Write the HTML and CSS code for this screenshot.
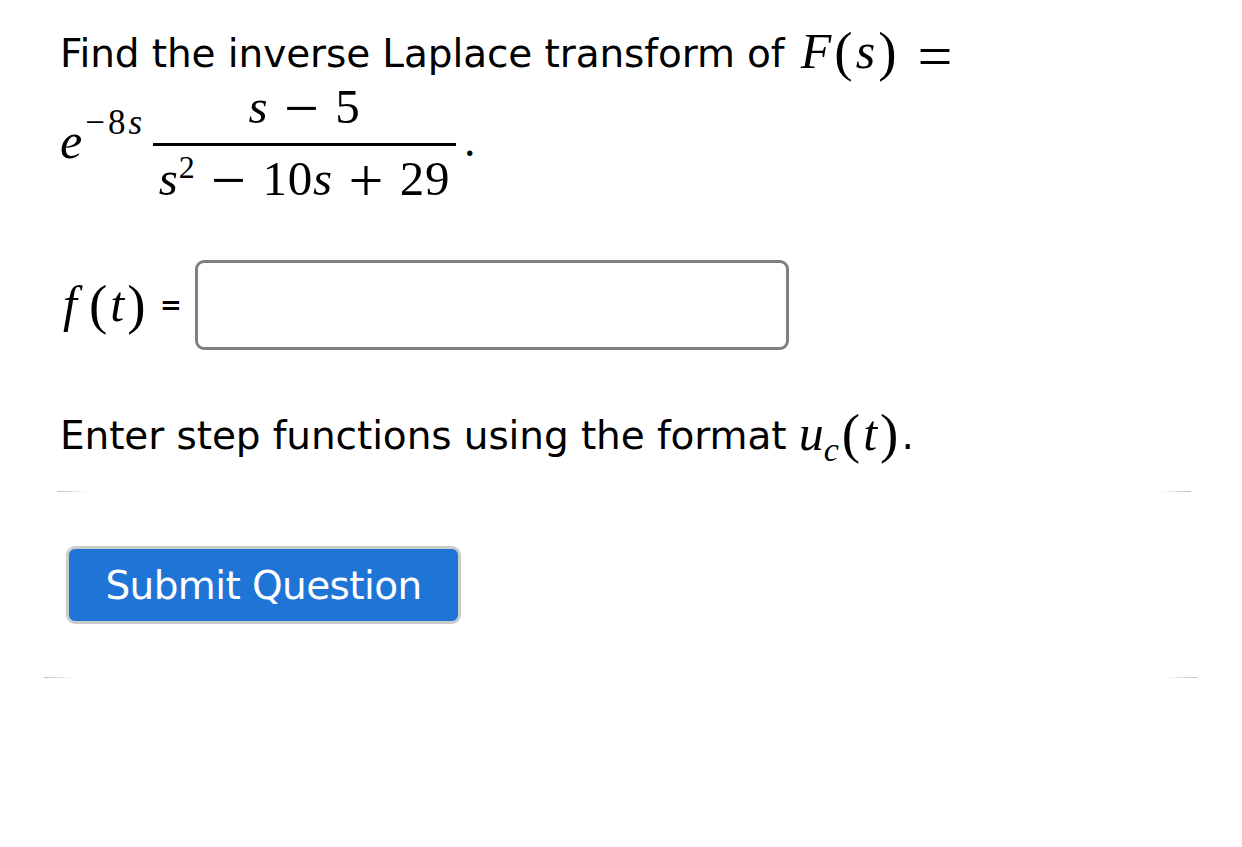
FILE: index.html
```html
<!DOCTYPE html>
<html lang="en">
<head>
    <meta charset="UTF-8">
    <title>Question</title>
    <link rel="stylesheet" href="styles.css">
</head>
<body>
    <div class="question">
        <p class="line first-line">Find the inverse Laplace transform of <span class="math big-f">F</span><span class="math-paren">(</span><span class="math">s</span><span class="math-paren">)</span><span class="math-eq">=</span></p>
        <div class="formula">
            <span class="math base">e</span><span class="exponent">−8<i>s</i></span>
            <span class="fraction">
                <span class="numerator"><i>s</i> <span class="op">−</span> 5</span>
                <span class="denominator"><i>s</i><sup>2</sup> <span class="op">−</span> 10<i>s</i> <span class="op">+</span> 29</span>
            </span>
            <span class="period">.</span>
        </div>
        <div class="answer-row">
            <span class="answer-label"><span class="math label-f">f</span><span class="math-paren">(</span><span class="math">t</span><span class="math-paren">)</span></span>
            <span class="answer-eq">=</span>
            <input type="text" class="answer-input">
        </div>
        <p class="line hint">Enter step functions using the format <span class="math">u<sub>c</sub></span><span class="math-paren">(</span><span class="math">t</span><span class="math-paren">)</span>.</p>
    </div>
    <div class="fade-rule inner-rule"><span class="fade-left"></span><span class="fade-right"></span></div>
    <button type="button" class="submit-btn">Submit Question</button>
    <div class="fade-rule outer-rule"><span class="fade-left"></span><span class="fade-right"></span></div>
</body>
</html>
```

FILE: styles.css
```css
body {
    margin: 0;
    background-color: #ffffff;
    color: #000000;
    font-family: "DejaVu Sans", sans-serif;
    font-size: 39px;
    letter-spacing: -0.1px;
}

.question {
    padding-left: 60px;
}

.line {
    margin: 0;
    white-space: nowrap;
}

.first-line {
    padding-top: 29px;
    line-height: 50px;
    height: 50px;
}

.math, .formula, .math-paren, .math-eq {
    font-family: "Liberation Serif", serif;
    letter-spacing: 0;
}

.math {
    font-style: italic;
    font-size: 50px;
    line-height: 0;
    vertical-align: -1px;
}

.math-paren {
    font-size: 55px;
    line-height: 0;
    margin: 0 3px;
    vertical-align: -3px;
}

.math-eq {
    font-size: 62px;
    line-height: 0;
    margin-left: 18px;
    vertical-align: -10px;
}

.big-f {
    margin-left: 4px;
}

.formula {
    display: flex;
    align-items: flex-start;
    height: 128px;
    margin-top: 2px;
}

.base {
    margin-top: 35px;
    line-height: 50px;
}

.exponent {
    font-size: 35px;
    line-height: 30px;
    letter-spacing: 3px;
    margin: 27px 0 0 3px;
}

.fraction {
    display: flex;
    flex-direction: column;
    align-items: center;
    margin-left: 8px;
    width: 303px;
    font-size: 49px;
    letter-spacing: 0.8px;
    word-spacing: 2.5px;
}

.op {
    font-size: 62px;
    line-height: 0;
    vertical-align: -6px;
}

.numerator {
    height: 61px;
    padding-top: 1px;
    line-height: 50px;
    width: 100%;
    text-align: center;
    border-bottom: 3px solid #000000;
}

.denominator {
    line-height: 50px;
    margin-top: 8px;
    white-space: nowrap;
}

.denominator sup {
    font-size: 32px;
    line-height: 0;
}

.period {
    font-size: 46px;
    margin-left: 8px;
    line-height: 50px;
    margin-top: 35px;
}

.answer-row {
    display: flex;
    align-items: center;
    height: 90px;
    margin-top: 51px;
}

.answer-label {
    width: 100px;
    padding-top: 2px;
}

.label-f {
    margin: 0 9px 0 3px;
}

.answer-eq {
    width: 35px;
    font-size: 26px;
    font-weight: 700;
}

.answer-input {
    width: 594px;
    height: 90px;
    box-sizing: border-box;
    margin: 0;
    border: 3px solid #808080;
    border-radius: 9px;
    background-color: #ffffff;
}

.hint {
    height: 50px;
    margin-top: 61px;
    line-height: 50px;
}

.hint sub {
    font-size: 34px;
    line-height: 0;
}

.fade-rule {
    display: flex;
    justify-content: space-between;
}

.fade-rule span {
    display: block;
    width: 30px;
    height: 1px;
}

.inner-rule {
    margin-top: 30px;
    padding: 0 51px 0 57px;
}

.outer-rule {
    margin-top: 53px;
    padding: 0 45px 0 44px;
}

.fade-left {
    background: linear-gradient(to right, #bbbbbb, #ffffff);
}

.fade-right {
    background: linear-gradient(to right, #ffffff, #bbbbbb);
}

.submit-btn {
    display: block;
    width: 395px;
    height: 78px;
    margin: 54px 0 0 66px;
    padding: 0;
    border: 3px solid #cccccc;
    border-radius: 9px;
    background-color: #1f75d6;
    color: #ffffff;
    font-family: "DejaVu Sans", sans-serif;
    font-size: 39px;
    letter-spacing: -0.6px;
}
```
